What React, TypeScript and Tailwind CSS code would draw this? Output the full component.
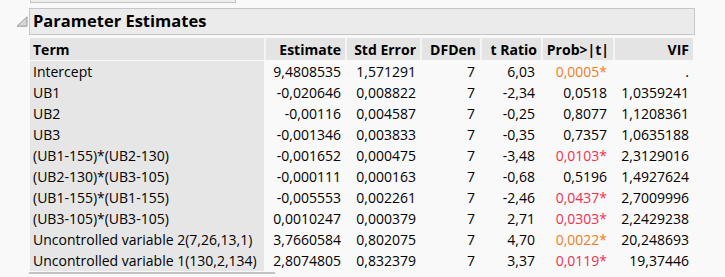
const rows: [string, string, string, string, string, string, string][] = [
  ["Intercept", "9,4808535", "1,571291", "7", "6,03", "0,0005*", "."],
  ["UB1", "-0,020646", "0,008822", "7", "-2,34", "0,0518", "1,0359241"],
  ["UB2", "-0,00116", "0,004587", "7", "-0,25", "0,8077", "1,1208361"],
  ["UB3", "-0,001346", "0,003833", "7", "-0,35", "0,7357", "1,0635188"],
  ["(UB1-155)*(UB2-130)", "-0,001652", "0,000475", "7", "-3,48", "0,0103*", "2,3129016"],
  ["(UB2-130)*(UB3-105)", "-0,000111", "0,000163", "7", "-0,68", "0,5196", "1,4927624"],
  ["(UB1-155)*(UB1-155)", "-0,005553", "0,002261", "7", "-2,46", "0,0437*", "2,7009996"],
  ["(UB3-105)*(UB3-105)", "0,0010247", "0,000379", "7", "2,71", "0,0303*", "2,2429238"],
  ["Uncontrolled variable 2(7,26,13,1)", "3,7660584", "0,802075", "7", "4,70", "0,0022*", "20,248693"],
  ["Uncontrolled variable 1(130,2,134)", "2,8074805", "0,832379", "7", "3,37", "0,0119*", "19,37446"],
];

const heads = ["Estimate", "Std Error", "DFDen", "t Ratio", "Prob>|t|", "VIF"];

function probColor(p: string) {
  if (!p.endsWith("*")) return "text-black";
  const v = parseFloat(p.replace(",", "."));
  return v < 0.01 ? "text-[#f07d1e]" : "text-[#f0304e]";
}

export default function App() {
  return (
    <div
      className="w-[725px] h-[277px] overflow-hidden bg-[#f9f9f9] text-black"
      style={{ fontFamily: '"Open Sans", "Noto Sans", sans-serif' }}
    >
      <div className="ml-[30px] w-[206px] h-[3px] border border-t-0 border-[#c4c4c4] bg-[#ededed]" />

      <div className="mt-[5px] flex items-center">
        <svg className="ml-[16px] w-[12px] h-[11px]" viewBox="0 0 12 11">
          <path d="M11 0.8 L11 10.2 L1 10.2 Z" fill="#d6d6d6" stroke="#9a9a9a" strokeWidth="1" />
        </svg>
        <div className="ml-[1px] w-[666px] h-[27px] border border-[#c6c6c6] bg-[#ebebeb] flex items-center pl-[3px]">
          <span className="text-[16.5px] font-bold leading-none">Parameter Estimates</span>
        </div>
      </div>

      <div className="mt-[3px] ml-[30px] grid grid-cols-[234px_81px_75px_60px_61px_72px_80px] text-[14px] leading-[21px]">
        <div className="h-[22px] bg-[#e4e4e4] font-bold flex items-center pl-[3px]">Term</div>
        {heads.map((h) => (
          <div
            key={h}
            className="h-[22px] bg-[#e4e4e4] border-l-2 border-[#f4f4f4] font-bold flex items-center justify-end pr-[4px]"
          >
            {h}
          </div>
        ))}
        <div className="col-span-7 h-[1px]" />
        {rows.map((r) => (
          <div key={r[0]} className="contents">
            <div className="bg-[#e6e6e6] pl-[3px] h-[21px] whitespace-nowrap">{r[0]}</div>
            <div className="text-right pr-[4px]">{r[1]}</div>
            <div className="text-right pr-[4px]">{r[2]}</div>
            <div className="text-right pr-[5px]">{r[3]}</div>
            <div className="text-right pr-[6px]">{r[4]}</div>
            <div className={`text-right pr-[6px] ${probColor(r[5])}`}>{r[5]}</div>
            <div className="text-right pr-[4px]">{r[6]}</div>
          </div>
        ))}
      </div>
      <div className="ml-[29px] mt-[1px] w-[246px] h-[2px] bg-[#c4c4c4]" />
    </div>
  );
}
